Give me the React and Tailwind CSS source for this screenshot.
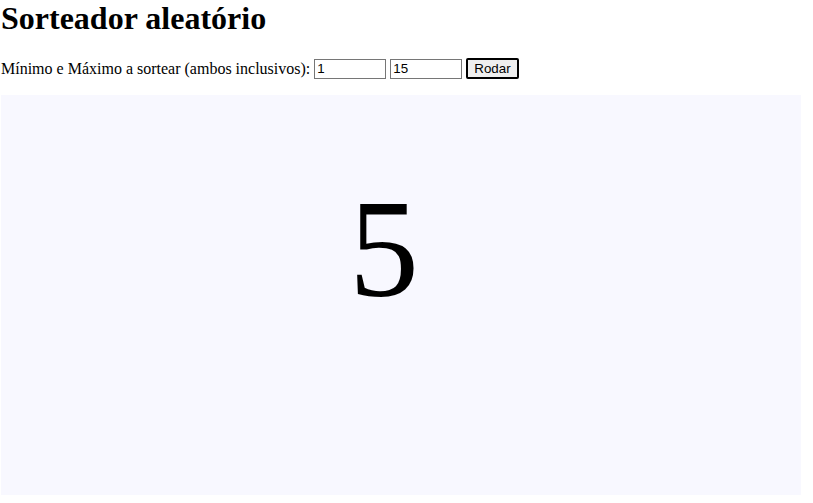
import React, { useState } from 'react';

export default function App() {
  const [min, setMin] = useState('1');
  const [max, setMax] = useState('15');
  const [valor, setValor] = useState(5);

  const rodar = () => {
    const a = parseInt(min, 10);
    const b = parseInt(max, 10);
    if (isNaN(a) || isNaN(b)) return;
    setValor(Math.floor(Math.random() * (b - a + 1)) + a);
  };

  return (
    <div className="bg-white text-black min-h-[503px]" style={{ fontFamily: '"Liberation Serif", serif' }}>
      <h1 className="m-0 text-[32px] font-bold leading-[37px] pl-[1px]">Sorteador aleatório</h1>
      <p className="mt-[21px] mb-[16px] text-[16px] leading-[20px] flex items-center pl-[1px]">
        <span>Mínimo e Máximo a sortear (ambos inclusivos):</span>
        <input
          value={min}
          onChange={(e) => setMin(e.target.value)}
          className="ml-[4px] w-[72px] h-[20px] border border-[#767676] px-[2px] text-[13.33px] bg-white"
          style={{ fontFamily: '"Liberation Sans", Arial, sans-serif' }}
        />
        <input
          value={max}
          onChange={(e) => setMax(e.target.value)}
          className="ml-[4px] w-[72px] h-[20px] border border-[#767676] px-[2px] text-[13.33px] bg-white"
          style={{ fontFamily: '"Liberation Sans", Arial, sans-serif' }}
        />
        <button
          onClick={rodar}
          className="ml-[4px] h-[21px] px-[6px] border-2 border-black rounded-[2px] bg-[#efefef] text-[13.33px] leading-none"
          style={{ fontFamily: '"Liberation Sans", Arial, sans-serif' }}
        >
          Rodar
        </button>
      </p>
      <div className="ml-[1px] w-[800px] h-[400px] bg-[#f8f8ff] flex justify-center pt-[84px] pr-[34px]">
        <span className="text-[140px] leading-none">{valor}</span>
      </div>
    </div>
  );
}
